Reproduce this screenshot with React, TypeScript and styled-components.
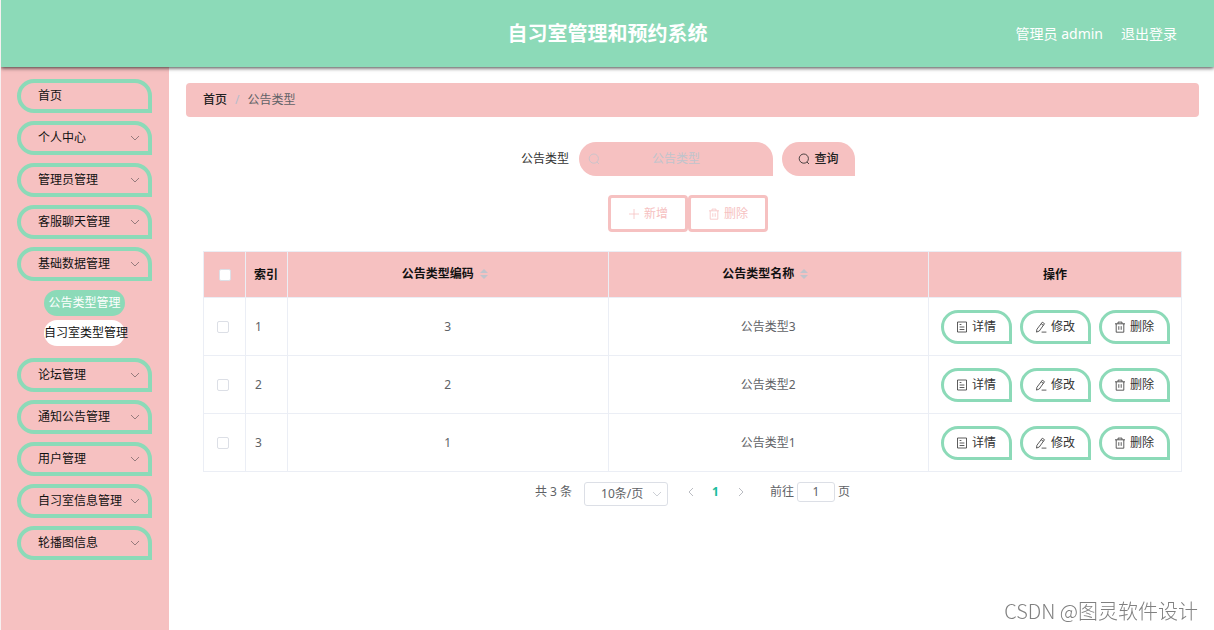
import React from "react";
import styled, { createGlobalStyle, css } from "styled-components";

const green = "#8cdab8";
const pink = "#f6c1c1";
const line = "#ebeef5";
const muted = "#606266";
const faint = "#c0c4cc";

const GlobalStyle = createGlobalStyle`
  * { box-sizing: border-box; }
  body {
    margin: 0;
    background: #fff;
    color: ${muted};
    font: 12px/16px "Noto Sans", "Noto Sans CJK SC", sans-serif;
  }
  button, input, select { font: inherit; color: inherit; }
  button, select { cursor: pointer; }
  a { color: inherit; text-decoration: none; }
`;

const Page = styled.div`
  display: flex;
  flex-direction: column;
  min-height: 100vh;
  border-left: 1px solid #f6f0f0;
`;

const Header = styled.header`
  display: grid;
  grid-template-columns: 1fr auto 1fr;
  align-items: center;
  height: 67px;
  padding: 0 37px;
  background: ${green};
  color: #fff;
  box-shadow: 0 1px 4px rgba(0, 0, 0, 0.75);
  clip-path: inset(0 0 -8px 0);
  position: relative;
  z-index: 1;
`;

const Title = styled.h1`
  grid-column: 2;
  margin: 0;
  font-size: 20px;
  line-height: 28px;
  font-weight: 700;
`;

const Account = styled.div`
  display: flex;
  justify-content: flex-end;
  gap: 18px;
  font-size: 14px;
  line-height: 20px;
`;

const Body = styled.div`
  display: flex;
  flex: 1;
`;

const Sidebar = styled.nav`
  flex: none;
  width: 168px;
  padding: 12px 17px 12px 16px;
  background: ${pink};
`;

const leaf = css`
  border-radius: 17px 17px 0 17px;
`;

const MenuList = styled.ul`
  display: flex;
  flex-direction: column;
  gap: 8px;
  margin: 0;
  padding: 0;
  list-style: none;
`;

const MenuButton = styled.button`
  display: flex;
  align-items: center;
  justify-content: space-between;
  width: 100%;
  height: 34px;
  padding: 0 7px 0 17px;
  border: 4px solid ${green};
  ${leaf}
  background: transparent;
  color: #111;
  white-space: nowrap;
`;

const SubMenu = styled.ul`
  display: flex;
  flex-direction: column;
  align-items: center;
  gap: 4px;
  margin: 0;
  padding: 9px 0 4px;
  list-style: none;
`;

const SubLink = styled.a<{ $active?: boolean }>`
  display: block;
  width: 81px;
  height: 26px;
  line-height: 26px;
  border-radius: 13px;
  text-align: center;
  white-space: nowrap;
  background: ${(p) => (p.$active ? green : "#fff")};
  color: ${(p) => (p.$active ? "#fff" : "#111")};
`;

const Main = styled.main`
  flex: 1;
  min-width: 0;
  padding: 16px 15px 24px 17px;
`;

const Breadcrumb = styled.nav`
  display: flex;
  align-items: center;
  gap: 8px;
  height: 34px;
  padding: 0 17px;
  border-radius: 4px;
  background: ${pink};
`;

const Home = styled.a`
  color: #222;
  font-weight: 500;
`;

const Slash = styled.span`
  color: #b4bccc;
`;

const Content = styled.div`
  padding: 25px 17px 0;
`;

const SearchForm = styled.form`
  display: flex;
  align-items: center;
  justify-content: center;
  padding-right: 9px;
`;

const SearchLabel = styled.label`
  margin-right: 10px;
  color: #333;
`;

const SearchBox = styled.div`
  display: flex;
  align-items: center;
  width: 194px;
  height: 34px;
  margin-right: 9px;
  padding: 0 21px 0 9px;
  ${leaf}
  background: ${pink};
  color: ${faint};
`;

const SearchInput = styled.input`
  flex: 1;
  min-width: 0;
  padding: 0;
  border: 0;
  outline: 0;
  background: transparent;
  text-align: center;
  color: ${muted};
  &::placeholder { color: ${faint}; opacity: 1; }
`;

const SearchButton = styled.button`
  display: flex;
  align-items: center;
  justify-content: center;
  gap: 4px;
  width: 73px;
  height: 34px;
  padding: 0;
  border: 0;
  ${leaf}
  background: ${pink};
  color: #222;
  font-weight: 500;
`;

const Toolbar = styled.div`
  display: flex;
  justify-content: center;
  padding: 19px 9px 19px 0;
`;

const ToolButton = styled.button`
  display: flex;
  align-items: center;
  justify-content: center;
  gap: 4px;
  width: 80px;
  height: 37px;
  padding: 0;
  border: 3px solid ${pink};
  border-radius: 4px;
  background: #fff;
  color: ${pink};
`;

const Table = styled.table`
  width: 100%;
  table-layout: fixed;
  border-collapse: collapse;
  text-align: center;
`;

const Col = styled.col<{ $width?: number }>`
  width: ${(p) => (p.$width ? `${p.$width}px` : "auto")};
`;

const Th = styled.th<{ $left?: boolean }>`
  height: 46px;
  padding: 0 8px;
  border: 1px solid ${line};
  background: ${pink};
  color: #111;
  font-weight: 700;
  text-align: ${(p) => (p.$left ? "left" : "center")};
  white-space: nowrap;
`;

const Td = styled.td<{ $left?: boolean }>`
  height: 58px;
  padding: 0 9px;
  border: 1px solid ${line};
  text-align: ${(p) => (p.$left ? "left" : "center")};
`;

const CheckTd = styled(Td)`
  padding: 0 11px 0 7px;
`;

const Check = styled.input`
  appearance: none;
  display: block;
  width: 12px;
  height: 12px;
  margin: 0 auto;
  border: 1px solid #dcdfe6;
  border-radius: 2px;
  background: #fff;
  &:checked { background: ${green}; }
`;

const SortLabel = styled.span`
  display: inline-flex;
  align-items: center;
  gap: 6px;
  padding: 0 6px 2px 0;
`;

const Actions = styled.div`
  display: flex;
  justify-content: center;
  gap: 8px;
`;

const ActionButton = styled.button`
  display: flex;
  align-items: center;
  justify-content: center;
  gap: 4px;
  width: 71px;
  height: 34px;
  padding: 0;
  border: 3px solid ${green};
  ${leaf}
  background: #fff;
  color: #333;
  white-space: nowrap;
`;

const Pagination = styled.div`
  display: flex;
  align-items: flex-start;
  justify-content: center;
  padding-top: 10px;
  line-height: 20px;
`;

const SizePicker = styled.div`
  display: grid;
  align-items: center;
  width: 84px;
  margin: 0 10px 0 12px;
  color: ${faint};
  & > * { grid-area: 1 / 1; }
  & > svg { justify-self: end; margin-right: 5px; pointer-events: none; }
`;

const SizeSelect = styled.select`
  appearance: none;
  width: 100%;
  height: 24px;
  padding: 0 16px;
  border: 1px solid #dcdfe6;
  border-radius: 3px;
  background: #fff;
  color: ${muted};
`;

const PageButton = styled.button<{ $current?: boolean }>`
  display: flex;
  align-items: center;
  justify-content: center;
  width: 25px;
  height: 20px;
  padding: 0;
  border: 0;
  background: transparent;
  color: ${(p) => (p.$current ? "#1abc9c" : "#a8abb2")};
  font-weight: ${(p) => (p.$current ? 700 : 400)};
`;

const Jump = styled.label`
  display: flex;
  gap: 3px;
  margin-left: 17px;
`;

const JumpInput = styled.input`
  width: 38px;
  height: 20px;
  padding: 0;
  border: 1px solid #dcdfe6;
  border-radius: 3px;
  text-align: center;
`;

const Watermark = styled.div`
  position: fixed;
  right: 16px;
  bottom: 5px;
  color: #808080;
  font-family: "Noto Sans CJK SC", sans-serif;
  font-size: 20px;
  font-weight: 300;
  line-height: 28px;
  pointer-events: none;
`;

const paths = {
  search: (
    <>
      <circle cx="5.8" cy="5.6" r="4.6" />
      <path d="M9 9l2 2" />
    </>
  ),
  plus: <path d="M6 1v10M1 6h10" />,
  trash: (
    <path d="M1 2.8h10M4 2.6V1.1h4v1.5M2.2 2.8v8.4h7.6V2.8M4.8 5.2v3.6M7.2 5.2v3.6" />
  ),
  doc: <path d="M1.5 1h9v10h-9zM3.6 3.5h1.8M3.6 6h4.8M3.6 8.5h4.8" />,
  edit: (
    <path d="M7.3 1.2l2.2 1.5-5.2 7.3-2.8 1.1.4-2.8zM6.2 2.8l2.2 1.5M6.6 11.1h4.8" />
  ),
  down: <path d="M2 4l4 4 4-4" />,
  left: <path d="M8 2L4 6l4 4" />,
  right: <path d="M4 2l4 4-4 4" />,
};

function Icon({ name }: { name: keyof typeof paths }) {
  return (
    <svg
      width="12"
      height="12"
      viewBox="0 0 12 12"
      fill="none"
      stroke="currentColor"
      strokeWidth="0.8"
      aria-hidden="true"
    >
      {paths[name]}
    </svg>
  );
}

function SortIcon() {
  return (
    <svg width="8" height="10" viewBox="0 0 8 10" fill={faint} aria-hidden="true">
      <path d="M4 0l4 4H0zM4 10L0 6h8z" />
    </svg>
  );
}

const MenuArrow = styled.span`
  display: flex;
  color: #7d6a6c;
`;

const menu: { label: string; leaf?: boolean; children?: string[] }[] = [
  { label: "首页", leaf: true },
  { label: "个人中心" },
  { label: "管理员管理" },
  { label: "客服聊天管理" },
  { label: "基础数据管理", children: ["公告类型管理", "自习室类型管理"] },
  { label: "论坛管理" },
  { label: "通知公告管理" },
  { label: "用户管理" },
  { label: "自习室信息管理" },
  { label: "轮播图信息" },
];

const rows = [
  { index: 1, code: 3, name: "公告类型3" },
  { index: 2, code: 2, name: "公告类型2" },
  { index: 3, code: 1, name: "公告类型1" },
];

export default function App() {
  return (
    <>
      <GlobalStyle />
      <Page>
        <Header>
          <Title>自习室管理和预约系统</Title>
          <Account>
            <span>管理员 admin</span>
            <a href="#logout">退出登录</a>
          </Account>
        </Header>
        <Body>
          <Sidebar>
            <MenuList>
              {menu.map((item) => (
                <li key={item.label}>
                  <MenuButton type="button">
                    {item.label}
                    {!item.leaf && (
                      <MenuArrow>
                        <Icon name="down" />
                      </MenuArrow>
                    )}
                  </MenuButton>
                  {item.children && (
                    <SubMenu>
                      {item.children.map((child, i) => (
                        <li key={child}>
                          <SubLink href="#type" $active={i === 0}>
                            {child}
                          </SubLink>
                        </li>
                      ))}
                    </SubMenu>
                  )}
                </li>
              ))}
            </MenuList>
          </Sidebar>
          <Main>
            <Breadcrumb>
              <Home href="#home">首页</Home>
              <Slash>/</Slash>
              <span>公告类型</span>
            </Breadcrumb>
            <Content>
              <SearchForm onSubmit={(e) => e.preventDefault()}>
                <SearchLabel htmlFor="type">公告类型</SearchLabel>
                <SearchBox>
                  <Icon name="search" />
                  <SearchInput id="type" placeholder="公告类型" />
                </SearchBox>
                <SearchButton type="submit">
                  <Icon name="search" />
                  查询
                </SearchButton>
              </SearchForm>
              <Toolbar>
                <ToolButton type="button">
                  <Icon name="plus" />
                  新增
                </ToolButton>
                <ToolButton type="button">
                  <Icon name="trash" />
                  删除
                </ToolButton>
              </Toolbar>
              <Table>
                <colgroup>
                  <Col $width={42} />
                  <Col $width={42} />
                  <Col />
                  <Col />
                  <Col $width={253} />
                </colgroup>
                <thead>
                  <tr>
                    <Th>
                      <Check type="checkbox" aria-label="全选" />
                    </Th>
                    <Th $left>索引</Th>
                    <Th>
                      <SortLabel>
                        公告类型编码
                        <SortIcon />
                      </SortLabel>
                    </Th>
                    <Th>
                      <SortLabel>
                        公告类型名称
                        <SortIcon />
                      </SortLabel>
                    </Th>
                    <Th>操作</Th>
                  </tr>
                </thead>
                <tbody>
                  {rows.map((row) => (
                    <tr key={row.index}>
                      <CheckTd>
                        <Check type="checkbox" aria-label={`选择 ${row.index}`} />
                      </CheckTd>
                      <Td $left>{row.index}</Td>
                      <Td>{row.code}</Td>
                      <Td>{row.name}</Td>
                      <Td>
                        <Actions>
                          <ActionButton type="button">
                            <Icon name="doc" />
                            详情
                          </ActionButton>
                          <ActionButton type="button">
                            <Icon name="edit" />
                            修改
                          </ActionButton>
                          <ActionButton type="button">
                            <Icon name="trash" />
                            删除
                          </ActionButton>
                        </Actions>
                      </Td>
                    </tr>
                  ))}
                </tbody>
              </Table>
              <Pagination>
                <span>共 3 条</span>
                <SizePicker>
                  <SizeSelect aria-label="每页条数">
                    <option>10条/页</option>
                  </SizeSelect>
                  <Icon name="down" />
                </SizePicker>
                <PageButton type="button" aria-label="上一页">
                  <Icon name="left" />
                </PageButton>
                <PageButton type="button" $current>
                  1
                </PageButton>
                <PageButton type="button" aria-label="下一页">
                  <Icon name="right" />
                </PageButton>
                <Jump>
                  前往
                  <JumpInput defaultValue="1" />
                  页
                </Jump>
              </Pagination>
            </Content>
          </Main>
        </Body>
        <Watermark>CSDN @图灵软件设计</Watermark>
      </Page>
    </>
  );
}
